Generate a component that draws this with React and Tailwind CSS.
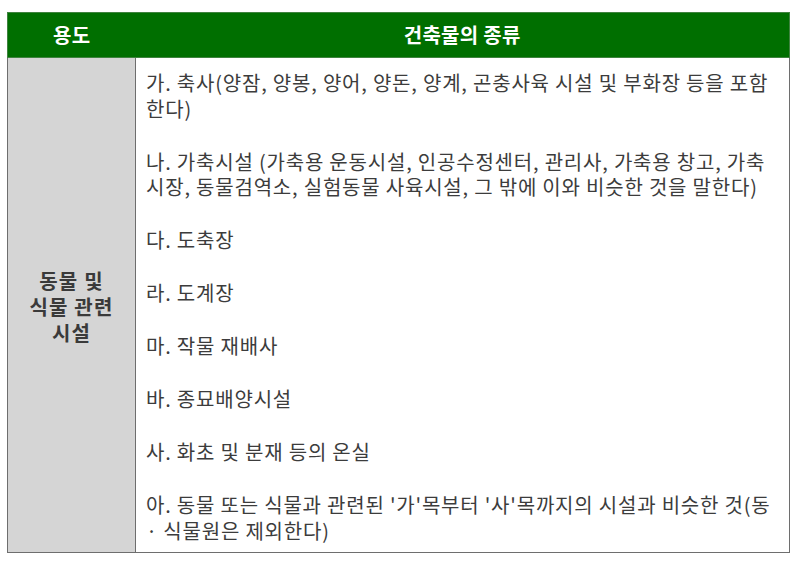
const items = [
  ['가. 축사(양잠, 양봉, 양어, 양돈, 양계, 곤충사육 시설 및 부화장 등을 포함', '한다)'],
  ['나. 가축시설 (가축용 운동시설, 인공수정센터, 관리사, 가축용 창고, 가축', '시장, 동물검역소, 실험동물 사육시설, 그 밖에 이와 비슷한 것을 말한다)'],
  ['다. 도축장'],
  ['라. 도계장'],
  ['마. 작물 재배사'],
  ['바. 종묘배양시설'],
  ['사. 화초 및 분재 등의 온실'],
  ["아. 동물 또는 식물과 관련된 '가'목부터 '사'목까지의 시설과 비슷한 것(동", '· 식물원은 제외한다)'],
];

export default function App() {
  return (
    <div className="w-[800px] h-[563px] bg-white pt-[12px] pl-[7px]" style={{ fontFamily: '"Malgun Gothic", "Noto Sans CJK KR", sans-serif' }}>
      <table className="w-[783px] border-collapse">
        <thead>
          <tr className="bg-[#006f00] text-white h-[45px]">
            <th className="w-[128px] border-y border-l border-[#3f833f] text-[20px] font-bold tracking-[0.3px]">용도</th>
            <th className="border-y border-r border-[#3f833f] text-[20px] font-bold tracking-[0.3px]">건축물의 종류</th>
          </tr>
        </thead>
        <tbody>
          <tr>
            <td className="bg-[#d5d5d5] border border-[#6e6e6e] text-center text-[20px] font-bold leading-[26px] tracking-[1.2px] text-[#3a3a3a] pt-[4px]">
              동물 및<br />식물 관련<br />시설
            </td>
            <td className="border border-[#6e6e6e] pl-[10px] pt-[12px] pb-[9px] text-[20px] leading-[25.5px] tracking-[0.8px] text-[#3c3c3c]">
              <div className="flex flex-col gap-[27.5px]">
                {items.map((lines, i) => (
                  <p key={i}>
                    {lines.map((l, j) => (
                      <span key={j} className="block whitespace-nowrap">{l}</span>
                    ))}
                  </p>
                ))}
              </div>
            </td>
          </tr>
        </tbody>
      </table>
    </div>
  );
}
